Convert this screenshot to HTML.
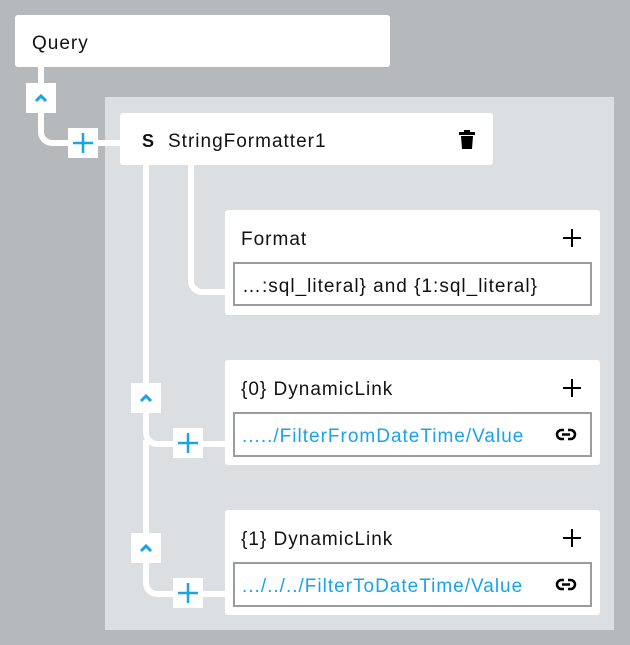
<!DOCTYPE html>
<html><head><style>
body{margin:0;width:630px;height:645px;background:#b6b9bc;position:relative;overflow:hidden;font-family:"Liberation Sans",sans-serif;color:#111}
div{position:absolute;box-sizing:border-box}
.card{background:#fff;border-radius:3px}
.t{font-size:19px;white-space:nowrap;letter-spacing:1px}
.inp{border:2px solid #9a9c9f;background:#fff}
.blue{color:#1aa3e8}
.box{background:#fff;width:30px;height:30px}
.line{border-color:#fff;border-style:solid;border-width:0}
</style></head><body>
<div class="card" style="left:15px;top:15px;width:375px;height:52px"><div class="t" style="left:17px;top:18px">Query</div></div>
<div style="left:105px;top:97px;width:509px;height:533px;background:#dcdfe2"></div>
<div class="line" style="left:38px;top:67px;width:84px;height:79px;border-left-width:6px;border-bottom-width:6px;border-bottom-left-radius:14px"></div>
<div class="box" style="left:26px;top:83px"><svg width="30" height="30"><path d="M10 18 L15 13 L20 18" stroke="#1aa3e8" stroke-width="3" fill="none"/></svg></div>
<div class="box" style="left:68px;top:128px"><svg width="30" height="30"><path d="M15 5V25M5 15H25" stroke="#1aa3e8" stroke-width="2.5"/></svg></div>
<div class="card" style="left:120px;top:113px;width:373px;height:52px">
<div class="t" style="left:22px;top:18px;font-weight:bold;font-size:18px">S</div>
<div class="t" style="left:48px;top:18px">StringFormatter1</div>
<svg style="position:absolute;left:337px;top:16px" width="20" height="22"><rect x="2" y="3" width="16" height="3" fill="#000"/><rect x="7" y="1" width="6" height="3" fill="#000"/><path d="M4 7H16L15 20H5Z" fill="#000"/></svg>
</div>
<div class="line" style="left:188px;top:165px;width:46px;height:130px;border-left-width:6px;border-bottom-width:6px;border-bottom-left-radius:14px"></div>
<div class="line" style="left:143px;top:165px;width:84px;height:282px;border-left-width:6px;border-bottom-width:6px;border-bottom-left-radius:14px"></div>
<div class="line" style="left:143px;top:440px;width:84px;height:157px;border-left-width:6px;border-bottom-width:6px;border-bottom-left-radius:14px"></div>
<div class="card" style="left:225px;top:210px;width:375px;height:105px">
<div class="t" style="left:16px;top:19px">Format</div>
<svg style="position:absolute;left:337px;top:18px" width="20" height="20"><path d="M10 1V19M1 10H19" stroke="#000" stroke-width="2"/></svg>
<div class="inp" style="left:8px;top:52px;width:359px;height:44px"><div class="t" style="left:7px;top:12px">…:sql_literal} and {1:sql_literal}</div></div>
</div>
<div class="card" style="left:225px;top:360px;width:375px;height:105px">
<div class="t" style="left:16px;top:19px">{0} DynamicLink</div>
<svg style="position:absolute;left:337px;top:18px" width="20" height="20"><path d="M10 1V19M1 10H19" stroke="#000" stroke-width="2"/></svg>
<div class="inp" style="left:8px;top:52px;width:359px;height:45px"><div class="t blue" style="left:7px;top:12px">...../FilterFromDateTime/Value</div>
<svg style="position:absolute;left:320px;top:13px" width="22" height="16"><rect x="2" y="3" width="18" height="9" rx="4.5" stroke="#000" stroke-width="2.5" fill="none"/><path d="M7 7.5H15" stroke="#000" stroke-width="2.5"/><rect x="9" y="1" width="4" height="4" fill="#fff"/><rect x="9" y="10" width="4" height="4" fill="#fff"/></svg></div>
</div>
<div class="box" style="left:131px;top:383px"><svg width="30" height="30"><path d="M10 18 L15 13 L20 18" stroke="#1aa3e8" stroke-width="3" fill="none"/></svg></div>
<div class="box" style="left:173px;top:428px"><svg width="30" height="30"><path d="M15 5V25M5 15H25" stroke="#1aa3e8" stroke-width="2.5"/></svg></div>
<div class="card" style="left:225px;top:510px;width:375px;height:105px">
<div class="t" style="left:16px;top:19px">{1} DynamicLink</div>
<svg style="position:absolute;left:337px;top:18px" width="20" height="20"><path d="M10 1V19M1 10H19" stroke="#000" stroke-width="2"/></svg>
<div class="inp" style="left:8px;top:52px;width:359px;height:45px"><div class="t blue" style="left:7px;top:12px">.../../../FilterToDateTime/Value</div>
<svg style="position:absolute;left:320px;top:13px" width="22" height="16"><rect x="2" y="3" width="18" height="9" rx="4.5" stroke="#000" stroke-width="2.5" fill="none"/><path d="M7 7.5H15" stroke="#000" stroke-width="2.5"/><rect x="9" y="1" width="4" height="4" fill="#fff"/><rect x="9" y="10" width="4" height="4" fill="#fff"/></svg></div>
</div>
<div class="box" style="left:131px;top:533px"><svg width="30" height="30"><path d="M10 18 L15 13 L20 18" stroke="#1aa3e8" stroke-width="3" fill="none"/></svg></div>
<div class="box" style="left:173px;top:578px"><svg width="30" height="30"><path d="M15 5V25M5 15H25" stroke="#1aa3e8" stroke-width="2.5"/></svg></div>
</body></html>
